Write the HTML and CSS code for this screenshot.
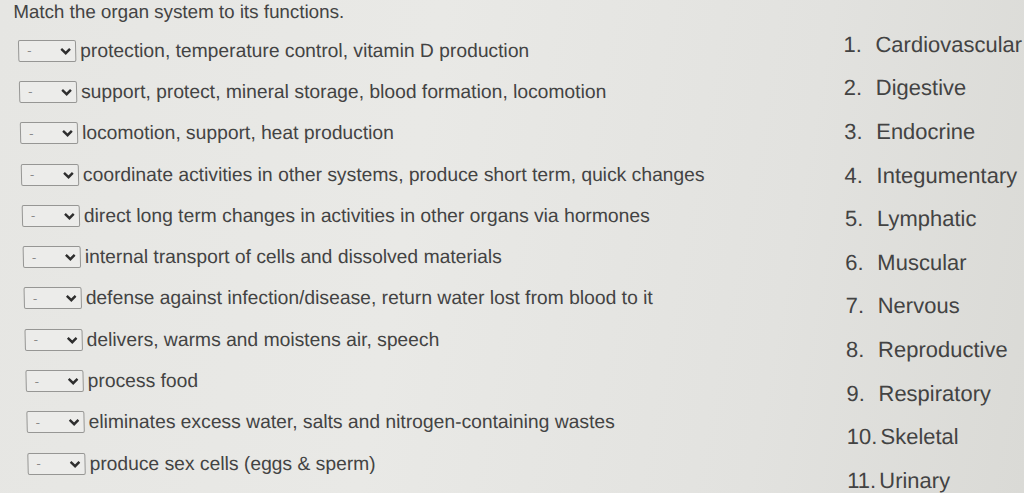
FILE: index.html
```html
<!DOCTYPE html>
<html lang="en">
<head>
    <meta charset="UTF-8">
    <meta name="viewport" content="width=device-width, initial-scale=1.0">
    <title>Organ systems</title>
    <link rel="stylesheet" href="styles.css">
</head>
<body>

    <div class="page">
        <!-- 문제와 드롭다운 -->
        <div class="left">
            <div class="title">Match the organ system to its functions.</div>

            <div class="rows">
                <div class="row"><span class="pick">-<svg viewBox="0 0 10 7"><path d="M1 1.5 L5 5.5 L9 1.5"/></svg></span>protection, temperature control, vitamin D production</div>
                <div class="row"><span class="pick">-<svg viewBox="0 0 10 7"><path d="M1 1.5 L5 5.5 L9 1.5"/></svg></span>support, protect, mineral storage, blood formation, locomotion</div>
                <div class="row"><span class="pick">-<svg viewBox="0 0 10 7"><path d="M1 1.5 L5 5.5 L9 1.5"/></svg></span>locomotion, support, heat production</div>
                <div class="row"><span class="pick">-<svg viewBox="0 0 10 7"><path d="M1 1.5 L5 5.5 L9 1.5"/></svg></span>coordinate activities in other systems, produce short term, quick changes</div>
                <div class="row"><span class="pick">-<svg viewBox="0 0 10 7"><path d="M1 1.5 L5 5.5 L9 1.5"/></svg></span>direct long term changes in activities in other organs via hormones</div>
                <div class="row"><span class="pick">-<svg viewBox="0 0 10 7"><path d="M1 1.5 L5 5.5 L9 1.5"/></svg></span>internal transport of cells and dissolved materials</div>
                <div class="row"><span class="pick">-<svg viewBox="0 0 10 7"><path d="M1 1.5 L5 5.5 L9 1.5"/></svg></span>defense against infection/disease, return water lost from blood to it</div>
                <div class="row"><span class="pick">-<svg viewBox="0 0 10 7"><path d="M1 1.5 L5 5.5 L9 1.5"/></svg></span>delivers, warms and moistens air, speech</div>
                <div class="row"><span class="pick">-<svg viewBox="0 0 10 7"><path d="M1 1.5 L5 5.5 L9 1.5"/></svg></span>process food</div>
                <div class="row"><span class="pick">-<svg viewBox="0 0 10 7"><path d="M1 1.5 L5 5.5 L9 1.5"/></svg></span>eliminates excess water, salts and nitrogen-containing wastes</div>
                <div class="row"><span class="pick">-<svg viewBox="0 0 10 7"><path d="M1 1.5 L5 5.5 L9 1.5"/></svg></span>produce sex cells (eggs &amp; sperm)</div>
            </div>
        </div>

        <!-- 보기 목록 -->
        <div class="right">
            <div class="item"><span class="num">1.</span>Cardiovascular</div>
            <div class="item"><span class="num">2.</span>Digestive</div>
            <div class="item"><span class="num">3.</span>Endocrine</div>
            <div class="item"><span class="num">4.</span>Integumentary</div>
            <div class="item"><span class="num">5.</span>Lymphatic</div>
            <div class="item"><span class="num">6.</span>Muscular</div>
            <div class="item"><span class="num">7.</span>Nervous</div>
            <div class="item"><span class="num">8.</span>Reproductive</div>
            <div class="item"><span class="num">9.</span>Respiratory</div>
            <div class="item"><span class="num">10.</span>Skeletal</div>
            <div class="item"><span class="num">11.</span>Urinary</div>
        </div>
    </div>

</body>
</html>
```

FILE: styles.css
```css
/* 기본 스타일 */
body {
    font-family: "Liberation Sans", Arial, sans-serif;
    margin: 0;
    padding: 0;
    color: #434343;
    background: linear-gradient(100deg, #e6e6e3 0%, #e9e9e6 40%, #e2e2df 75%, #dadad6 100%);
    height: 493px;
    overflow: hidden;
}

.page {
    display: flex;
    justify-content: space-between;
}

.left {
    padding-left: 13px;
    transform: skewX(1.3deg);
    transform-origin: top left;
}

.title {
    font-size: 18.8px;
    padding-top: 1px;
    line-height: 22px;
}

.rows {
    display: flex;
    flex-direction: column;
    padding-top: 7px;
    padding-left: 4px;
}

.row {
    display: flex;
    align-items: center;
    height: 41.3px;
    font-size: 19.3px;
    white-space: nowrap;
}

/* 드롭다운 */
.pick {
    display: inline-flex;
    align-items: center;
    justify-content: space-between;
    box-sizing: border-box;
    width: 58px;
    height: 22px;
    padding: 0 4px 0 8px;
    margin-right: 4px;
    border: 1px solid #969694;
    border-radius: 2px;
    background: #ececea;
    font-size: 13px;
    color: #8a8a8a;
}

.pick svg {
    width: 11px;
    height: 8px;
    fill: none;
    stroke: #2e2e2e;
    stroke-width: 2.2;
}

.right {
    padding-top: 23px;
    width: 181px;
    font-size: 22px;
    transform: skewX(0.5deg);
    transform-origin: top left;
}

.item {
    height: 43.6px;
    display: flex;
    align-items: center;
    white-space: nowrap;
}

.num {
    display: inline-block;
    min-width: 32px;
    padding-right: 3px;
    box-sizing: border-box;
}
```
